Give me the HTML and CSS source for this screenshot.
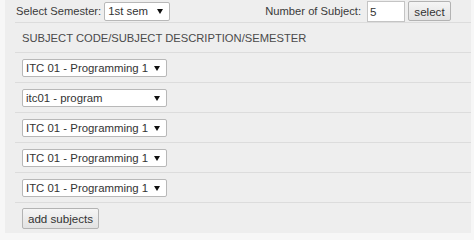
FILE: index.html
```html
<!DOCTYPE html>
<html>
<head>
<meta charset="utf-8">
<link rel="stylesheet" href="styles.css">
</head>
<body>
<div class="panel">
  <div class="toprow">
    <div class="group">
      <label class="lbl">Select Semester:</label>
      <span class="sel sel-sem"><select><option>1st sem</option></select></span>
    </div>
    <div class="group right">
      <label class="lbl">Number of Subject:</label>
      <input class="num" type="text" value="5">
      <button class="btn btn-select">select</button>
    </div>
  </div>
  <div class="row head">SUBJECT CODE/SUBJECT DESCRIPTION/SEMESTER</div>
  <div class="row"><span class="sel"><select><option>ITC 01 - Programming 1</option></select></span></div>
  <div class="row"><span class="sel"><select><option>itc01 - program</option></select></span></div>
  <div class="row"><span class="sel"><select><option>ITC 01 - Programming 1</option></select></span></div>
  <div class="row"><span class="sel"><select><option>ITC 01 - Programming 1</option></select></span></div>
  <div class="row"><span class="sel"><select><option>ITC 01 - Programming 1</option></select></span></div>
  <div class="row last"><button class="btn btn-add">add subjects</button></div>
</div>
</body>
</html>
```

FILE: styles.css
```css
html, body {
  margin: 0;
  padding: 0;
  background: #f7f7f7;
}
body {
  font-family: "Liberation Sans", Arial, sans-serif;
  color: #3a3a3a;
  font-size: 12px;
}
.panel {
  margin: 0 3px 0 5px;
  height: 233px;
  box-sizing: border-box;
  background: #eeeeee;
  padding-left: 10px;
}
.toprow {
  height: 22px;
  border-bottom: 1px solid #dcdcdc;
  display: flex;
  align-items: center;
  justify-content: space-between;
  padding-left: 1px;
  padding-right: 20px;
}
.group {
  display: flex;
  align-items: center;
}
.lbl {
  font-size: 11.2px;
  margin-right: 3px;
}
.right .lbl {
  margin-right: 6px;
}
.row {
  height: 29px;
  border-bottom: 1px solid #dcdcdc;
  display: flex;
  align-items: center;
  padding-left: 7px;
}
.row.last {
  border-bottom: none;
  height: 30px;
}
.head {
  font-size: 11.2px;
  color: #4a4a4a;
}
.sel {
  position: relative;
  display: inline-block;
}
.sel select {
  -webkit-appearance: none;
  appearance: none;
  font-family: "Liberation Sans", Arial, sans-serif;
  font-size: 11.4px;
  color: #333;
  width: 145px;
  height: 18px;
  padding: 0 14px 0 3px;
  margin: 0;
  border: 1px solid #b8b8b8;
  border-radius: 2px;
  background: #fff;
  display: block;
}
.sel::after {
  content: "";
  position: absolute;
  right: 7px;
  top: 7px;
  border-left: 3px solid transparent;
  border-right: 3px solid transparent;
  border-top: 5px solid #111;
  pointer-events: none;
}
.sel-sem select {
  width: 66px;
  height: 19px;
}
.num {
  font-family: "Liberation Sans", Arial, sans-serif;
  font-size: 11.6px;
  color: #333;
  width: 38px;
  height: 21px;
  box-sizing: border-box;
  border: 1px solid #c4c4c4;
  padding: 0 2px;
  margin: 0 3px 0 0;
  background: #fff;
}
.btn {
  font-family: "Liberation Sans", Arial, sans-serif;
  font-size: 11.6px;
  color: #333;
  border: 1px solid #b3b3b3;
  border-radius: 2px;
  background: linear-gradient(#f5f5f5, #e2e2e2);
  margin: 0;
  box-sizing: border-box;
}
.btn-select {
  width: 43px;
  height: 20px;
  padding: 0;
}
.btn-add {
  width: 77px;
  height: 21px;
  padding: 0;
}
```
